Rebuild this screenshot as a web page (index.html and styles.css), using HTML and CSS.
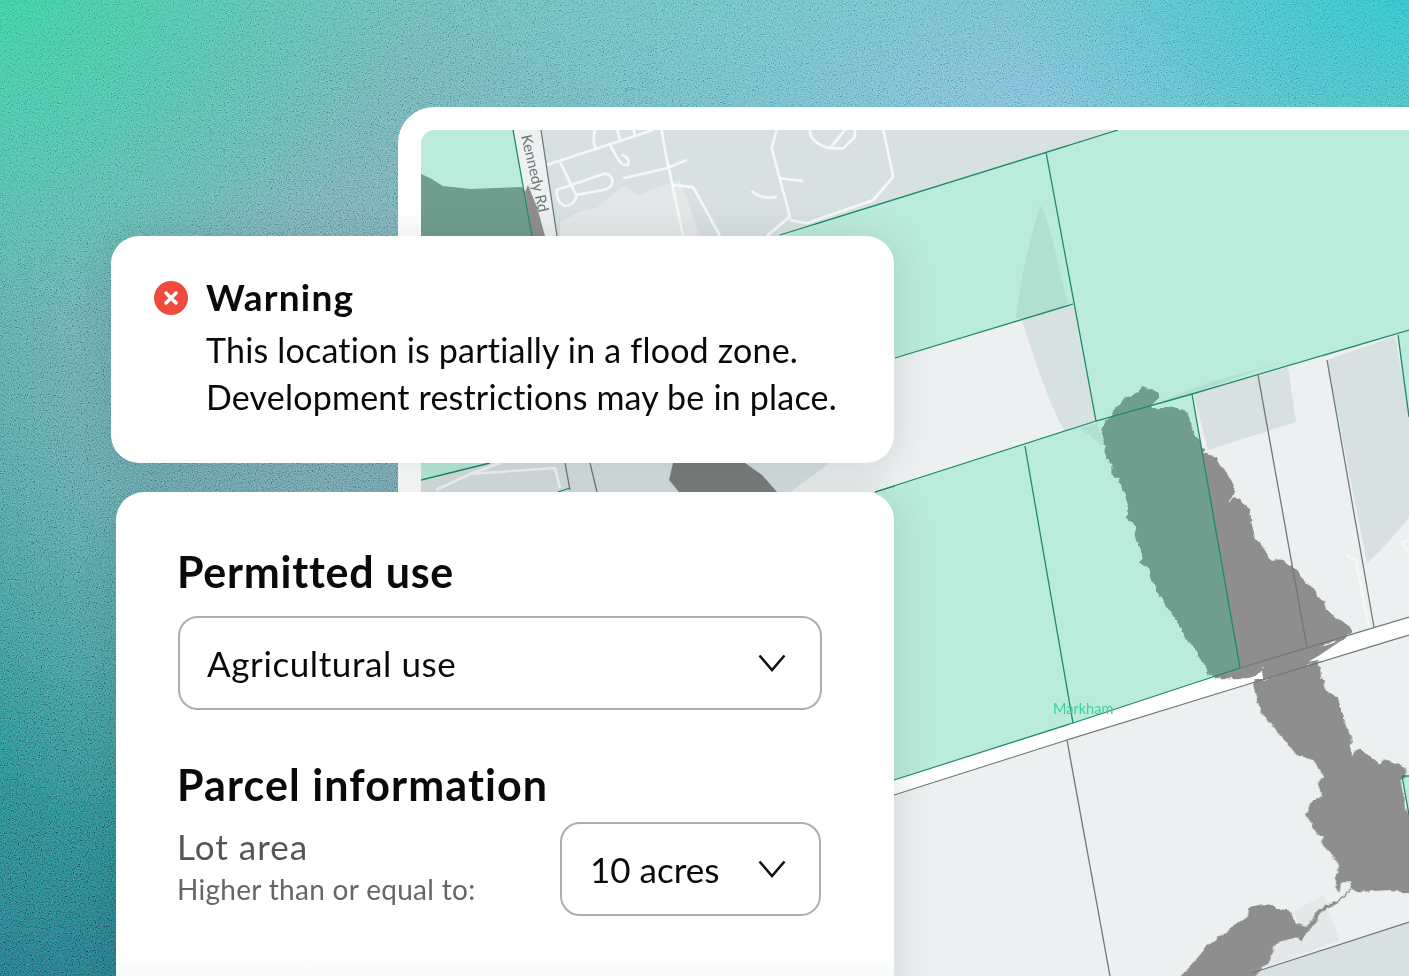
FILE: index.html
```html
<!DOCTYPE html>
<html lang="en">
<head>
<meta charset="utf-8">
<title>Parcel zoning</title>
<link rel="stylesheet" href="styles.css">
</head>
<body>
<main class="stage">
  <svg class="grain" aria-hidden="true">
    <filter id="noise"><feTurbulence type="fractalNoise" baseFrequency="0.87" numOctaves="2" seed="4"/><feColorMatrix type="matrix" values="1.1 1.1 1.1 0 -1.15  1.1 1.1 1.1 0 -1.15  1.1 1.1 1.1 0 -1.15  0 0 0 0 1"/></filter>
    <rect width="100%" height="100%" filter="url(#noise)"/>
  </svg>

  <section class="window">
    <svg class="map" viewBox="421 130 988 846" width="988" height="846">
      <defs>
        <filter id="rough" filterUnits="userSpaceOnUse" x="421" y="130" width="1020" height="880">
          <feTurbulence type="fractalNoise" baseFrequency="0.09" numOctaves="3" seed="7"/>
          <feDisplacementMap in="SourceGraphic" scale="7" xChannelSelector="R" yChannelSelector="G"/>
        </filter>
        <clipPath id="greens">
          <polygon points="780,235 1118,130 1409,130 1409,330 1096,421 1073,304 895,358 880,240"/>
          <polygon points="875,492 1096,421 1192,394 1240,668 1073,723 894,780 860,500"/>
        </clipPath>
        <path id="flood-top" transform="translate(1000 360) scale(.3333)" d="M425 78 L475 98 478 112 455 135 455 145 520 145 558 155 600 250 612 265 610 280 650 290 665 325 690 350 705 380 685 430 700 412 750 445 755 490 765 530 800 570 805 595 850 600 880 625 950 695 985 755 1050 800 1055 815 1030 838 980 850 955 880 925 905 895 915 790 925 785 940 740 955 640 955 630 945 605 900 560 830 530 780 500 735 450 650 445 625 420 605 430 595 410 545 400 490 380 475 385 440 370 400 360 360 335 345 335 320 305 240 310 195 330 170 360 130 405 100Z"/>
      </defs>

      <rect class="land" x="421" y="130" width="988" height="846"/>

      <!-- darker blocks -->
      <polygon class="block" points="541,130 1118,130 780,236 557,236"/>
      <polygon class="strip" points="513,130 541,130 557,236 532,236"/>
      <path class="block-pale" d="M560 223 578 212 597 208 613 194 625 186 638 196 650 190 680 180 700 236 560 236Z"/>
      <polygon class="block" points="421,463 830,463 790,492 421,492"/>
      <path class="block" d="M1022 320 1073 304 1096 421 1066 432 C1050 410 1030 345 1022 320Z"/>
      <polygon class="block" points="1193,393 1288,367 1296,422 1208,450"/>
      <path class="block" d="M1327 360 L1395 336 1409 417 1409 517 C1395 535 1380 552 1367 563Z"/>
      <polygon class="block" points="1252,973 1409,922 1409,976 1252,976"/>
      <path class="block-pale" transform="translate(890 680) scale(.3333)" d="M1210 695 1300 645 1350 780 1085 880 1170 790 1240 760Z"/>

      <!-- parcels in use -->
      <g class="green">
        <polygon points="421,130 513,130 532,236 421,236"/>
        <polygon points="780,235 1118,130 1409,130 1409,330 1096,421 1073,304 895,358 880,240"/>
        <polygon points="875,492 1096,421 1192,394 1240,668 1073,723 894,780 860,500"/>
        <polygon points="1398,335 1409,330 1409,417 1402,378"/>
        <polygon points="421,480 490,463 421,463"/>
        <polygon points="1402,776 1409,776 1409,815 1408,815"/>
      </g>
      <path class="block-soft" d="M1040 205 C1030 240 1020 280 1016 318 1030 320 1055 312 1068 303 1056 260 1050 220 1040 205Z"/>
      <path class="block-soft" transform="translate(1000 360) scale(.3333)" d="M480 125 620 70 865 0 800 20 575 102Z"/>
      <path class="block-soft" transform="translate(1000 360) scale(.3333)" d="M240 205 290 190 320 260 300 250Z"/>

      <!-- road -->
      <polygon class="road" points="1073,723 1240,668 1409,617 1409,635 1252,683 1067,740 894,795 894,780"/>

      <!-- top-left estate roads -->
      <g class="lane" transform="translate(400 100) scale(.3333)">
        <path d="M440 195 760 90M585 90Q575 130 590 150M652 90 660 120M700 90 705 105M480 185 528 285M630 135 650 170Q665 200 685 195 690 170 665 165"/>
        <path d="M470 270 610 222Q635 220 638 245 635 265 610 270L530 285Q525 315 495 318 470 310 470 270Z"/>
        <path d="M670 235 800 205 860 180M785 90 795 150 850 410M820 255 880 262 960 408"/>
        <path d="M1130 90 1115 145 1170 350 1100 408M1055 272Q1085 300 1130 290M1142 235 1210 243M1170 360 1220 370 1420 300 1480 230 1450 90M1230 90Q1230 130 1290 145L1330 145 1365 110 1365 90M1290 145 1335 90"/>
      </g>
      <g class="lane" transform="translate(1000 360) scale(.3333)">
        <path d="M1040 585 1068 600 1105 795M1205 548 1227 542M1205 548 1227 577"/>
      </g>

      <!-- strip between the two cards -->
      <g class="lane">
        <path d="M436 490 470 474 555 468 560 488M500 463 470 474"/>
      </g>
      <path class="line-green" d="M421 480 490 463M558 492 570 488M875 492 895 486"/>
      <path class="line-grey" d="M565 463 570 490M590 463 597 492M541 130 557 236"/>
      <path class="flood-dim" d="M673 463 669 480 679 492 777 492 762 475 745 463Z"/>

      <!-- top-left flood -->
      <path class="flood-green" d="M421 174 430 178 443 186 470 189 522 187 525 192 532 236 421 236Z"/>
      <path class="flood" d="M528 185 525 192 532 236 545 236 537 207Z"/>

      <!-- central flood -->
      <g filter="url(#rough)">
        <use href="#flood-top" class="flood"/>
        <path class="flood" transform="translate(1000 360) scale(.3333)" d="M760 975 790 960 955 900 965 960 975 1000 1010 1010 1030 1080 830 1080 790 1060 770 1010Z"/>
        <path class="flood" transform="translate(890 680) scale(.3333)" d="M1090 0 1095 40 1110 80 1130 120 1190 190 1220 225 1280 250 1300 290 1285 320 1298 350 1260 370 1248 400 1270 440 1295 470 1290 482 1340 540 1345 580 1332 610 1350 632 1352 610 1380 610 1385 630 1340 672 1300 690 1265 740 1230 785 1215 775 1165 785 1130 850 1060 930 830 930 900 860 950 800 1000 760 1070 710 1075 685 1115 675 1200 692 1220 730 1250 742 1290 685 1340 665 1380 630 1420 635 1500 630 1600 648 1600 410 1550 400 1535 300 1550 290 1545 260 1480 240 1470 255 1410 205 1385 225 1385 185 1365 130 1340 90 1335 45 1310 35 1300 0Z"/>
      </g>
      <path class="flood" transform="translate(1000 360) scale(.3333)" d="M785 925 1030 838 960 885 925 905 960 900 790 962Z"/>
      <g clip-path="url(#greens)"><g filter="url(#rough)"><use href="#flood-top" class="flood-green"/></g></g>

      <!-- parcel outlines -->
      <path class="line-green" d="M780 235 1118 130M1046 152 1096 421M895 358 1073 304M875 492 1096 421 1192 394 1409 330M1192 394 1240 668M1025 446 1073 723M894 780 1073 723 1240 668M1398 335 1409 417M1402 776 1409 815M1402 776 1409 776M513 130 532 236"/>
      <path class="line-grey" d="M1258 375 1307 648M1327 360 1374 627M1240 668 1409 617M894 795 1067 740 1252 683M1252 683 1409 635M1067 740 1110 976M1252 973 1409 922"/>

      <text class="road-name" transform="translate(521 136) rotate(77)">Kennedy Rd</text>
      <text class="place" x="1053" y="714">Markham</text>
    </svg>
  </section>

  <div class="panels">
    <article class="card warning">
      <div class="warning-head">
        <svg class="warning-icon" viewBox="0 0 34 34" width="34" height="34" aria-hidden="true">
          <circle cx="17" cy="17" r="17"/>
          <path d="M12 12 22 22M22 12 12 22"/>
        </svg>
        <h2 class="warning-title">Warning</h2>
      </div>
      <p class="warning-text">This location is partially in a flood zone.<br>Development restrictions may be in place.</p>
    </article>

    <article class="card form">
      <h2 class="section-title">Permitted use</h2>
      <div class="select select-wide">
        <span class="select-value">Agricultural use</span>
        <svg class="chevron" viewBox="0 0 28 18" width="28" height="18" aria-hidden="true"><path d="M1.5 1.5 14 16 26.500 1.500"/></svg>
      </div>
      <h2 class="section-title section-second">Parcel information</h2>
      <div class="field">
        <div class="field-label">
          <span class="field-name">Lot area</span>
          <span class="field-hint">Higher than or equal to:</span>
        </div>
        <div class="select select-small">
          <span>10 acres</span>
          <svg class="chevron" viewBox="0 0 28 18" width="28" height="18" aria-hidden="true"><path d="M1.5 1.5 14 16 26.500 1.500"/></svg>
        </div>
      </div>
    </article>
  </div>
</main>
</body>
</html>
```
FILE: styles.css
```css
* { box-sizing: border-box; }
html, body { margin: 0; padding: 0; }
body { font-family: "Lato", "Liberation Sans", sans-serif; color: #0a0a0a; }

.stage {
  position: relative;
  width: 1409px;
  height: 976px;
  overflow: hidden;
  background:
    radial-gradient(400px 230px at 1409px 0, rgba(48,190,200,.95), rgba(48,190,200,0)),
    radial-gradient(620px 260px at 1010px 100px, rgba(125,185,220,.85), rgba(125,185,220,0)),
    radial-gradient(420px 320px at 0 0, rgba(60,200,155,1), rgba(60,200,155,0)),
    radial-gradient(480px 560px at 340px 360px, rgba(125,165,180,1), rgba(125,165,180,0)),
    linear-gradient(180deg, #5cbcb0 0, #4a9f9a 40%, #2f8a8a 72%, #27727e 100%);
}

.grain {
  position: absolute;
  inset: 0;
  width: 100%;
  height: 100%;
  opacity: .36;
  mix-blend-mode: overlay;
}

.window {
  position: absolute;
  left: 398px;
  top: 107px;
  width: 1011px;
  height: 869px;
  padding: 23px 0 0 23px;
  background: #fff;
  border-radius: 36px 0 0 0;
}

.map { display: block; border-radius: 14px 0 0 0; }
.land { fill: #ecf0f1; }
.block { fill: #d8e1e1; }
.block-pale { fill: #e4e8e8; }
.block-soft { fill: #a9d6c6; opacity: .55; }
.strip { fill: #eef1f1; }
.green polygon { fill: #bbebdb; }
.road { fill: #fff; }
.lane path { fill: none; stroke: #f6f8f8; stroke-width: 2.500px; }
.lane[transform] path { stroke-width: 8px; }
.line-green { fill: none; stroke: #1f8a68; stroke-width: 1.3px; }
.line-grey { fill: none; stroke: #6d7a78; stroke-width: 1.3px; }
.flood { fill: #8e8e8e; }
.flood-green { fill: #6f9e8e; }
.flood-dim { fill: #7b7f7d; }
.road-name { font: 15px "Lato", sans-serif; fill: #6a7876; }
.place { font: 14.500px "Lato", sans-serif; fill: #3fd0a2; }

.panels {
  position: absolute;
  left: 111px;
  top: 236px;
  display: flex;
  flex-direction: column;
  gap: 29px;
}

.card {
  background: #fff;
  border-radius: 28px;
  box-shadow: 0 4px 40px rgba(20, 50, 50, .14);
}

.warning {
  width: 783px;
  height: 227px;
  padding: 41px 0 0 43px;
}

.warning-head { display: flex; align-items: center; gap: 18px; height: 42px; }
.warning-icon { flex: none; }
.warning-icon circle { fill: #ee4b3e; }
.warning-icon path { stroke: #fff; stroke-width: 3.500px; stroke-linecap: round; fill: none; }
.warning-title { margin: -2px 0 0 0; font-size: 37px; line-height: 42px; font-weight: 700; letter-spacing: 1.200px; }
.warning-text { margin: 7px 0 0 52px; font-size: 34px; line-height: 47px; font-weight: 400; letter-spacing: .2px; }

.form {
  margin-left: 5px;
  width: 778px;
  height: 520px;
  padding: 54px 72px 0 61px;
  background: linear-gradient(180deg, #fff 0, #fff 89%, #e9ecec 100%);
}

.section-title { margin: 0; font-size: 43px; line-height: 52px; font-weight: 700; letter-spacing: .75px; }
.section-second { margin-top: 49px; letter-spacing: 1.100px; }

.select {
  display: flex;
  align-items: center;
  justify-content: space-between;
  height: 94px;
  border: 2px solid #aeaeae;
  border-radius: 20px;
  font-size: 35px;
  background: #fff;
}
.select-wide { width: 644px; margin-top: 18px; padding: 0 34px 0 27px; margin-left: 1px; }
.select-value { letter-spacing: .6px; }
.select-small { width: 261px; padding: 0 33px 0 28px; }
.chevron { flex: none; }
.chevron path { fill: none; stroke: #111; stroke-width: 2.600px; }

.field { display: flex; justify-content: space-between; align-items: flex-start; width: 644px; margin-top: 11px; }
.field-label { display: flex; flex-direction: column; }
.field-name { font-size: 35px; line-height: 44px; color: #555; margin-top: 2px; letter-spacing: 1px; }
.field-hint { font-size: 28px; line-height: 36px; color: #666; letter-spacing: .3px; margin-top: 3px; }
```
